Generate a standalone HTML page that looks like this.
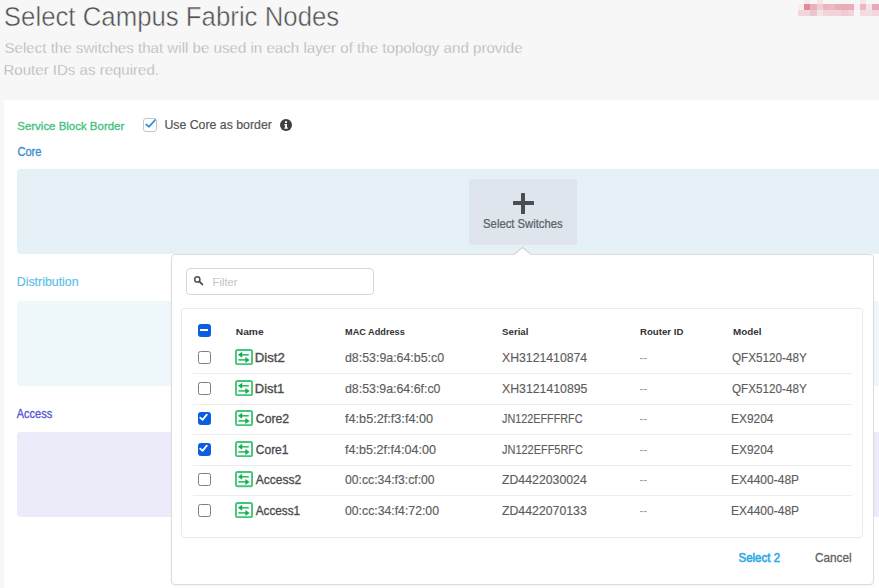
<!DOCTYPE html>
<html><head><meta charset="utf-8">
<style>
*{margin:0;padding:0;box-sizing:border-box}
html,body{width:879px;height:588px;overflow:hidden;background:#f7f7f7;font-family:"Liberation Sans",sans-serif}
.t{position:absolute;white-space:nowrap;line-height:1;transform-origin:0 0}
.px{position:absolute}
#panel{position:absolute;left:4.4px;top:99.6px;width:875px;height:489px;background:#fff}
.area{position:absolute;left:17px;width:870px;height:85px;border-radius:4px}
#chk{position:absolute;left:143px;top:118px;width:14px;height:14px;border:1.6px solid #c6c6c6;border-radius:3px;background:#fff}
#info{position:absolute;left:280.3px;top:119.3px;width:11.8px;height:11.8px;border-radius:50%;background:#3f3f3f}
#btn{position:absolute;left:469px;top:178.8px;width:108px;height:66.5px;background:#dfe5ec;border-radius:2px}
#popup{position:absolute;left:171px;top:254px;width:703px;height:331px;background:#fff;border:1px solid #dcdcdc;border-radius:4px;box-shadow:0 1px 2px rgba(0,0,0,0.05)}
#filter{position:absolute;left:186px;top:268px;width:187.5px;height:26.5px;border:1.8px solid #d6d6d6;border-radius:4px;background:#fff}
#card{position:absolute;left:180.6px;top:308px;width:682.4px;height:230px;border:1px solid #ebebeb;border-radius:3px;background:#fff}
.cb{position:absolute;left:198.2px;width:13px;height:13px;border:1.9px solid #7c7c8c;border-radius:2.5px;background:#fff}
.cbon{background:#0b5ee2;border-color:#0b5ee2}
.sep{position:absolute;left:193px;width:659px;height:1px;background:#ececec}
.ic{position:absolute;left:235px;width:18px;height:16.2px}
</style></head>
<body>
<div class="px" style="left:804.20px;top:0.00px;width:6.20px;height:3.90px;background:#f7eaed"></div>
<div class="px" style="left:816.60px;top:0.00px;width:6.20px;height:3.90px;background:#f5e3e7"></div>
<div class="px" style="left:860.00px;top:0.00px;width:6.20px;height:3.90px;background:#f7e6e9"></div>
<div class="px" style="left:798.00px;top:3.90px;width:6.20px;height:6.20px;background:#f6edef"></div>
<div class="px" style="left:804.20px;top:3.90px;width:6.20px;height:6.20px;background:#e08a9a"></div>
<div class="px" style="left:810.40px;top:3.90px;width:6.20px;height:6.20px;background:#eab0bb"></div>
<div class="px" style="left:816.60px;top:3.90px;width:6.20px;height:6.20px;background:#f0ccd3"></div>
<div class="px" style="left:822.80px;top:3.90px;width:6.20px;height:6.20px;background:#ebb5bf"></div>
<div class="px" style="left:829.00px;top:3.90px;width:6.20px;height:6.20px;background:#ecbac4"></div>
<div class="px" style="left:835.20px;top:3.90px;width:6.20px;height:6.20px;background:#e9adb8"></div>
<div class="px" style="left:841.40px;top:3.90px;width:6.20px;height:6.20px;background:#e8abb7"></div>
<div class="px" style="left:847.60px;top:3.90px;width:6.20px;height:6.20px;background:#e9adb8"></div>
<div class="px" style="left:853.80px;top:3.90px;width:6.20px;height:6.20px;background:#f6eef0"></div>
<div class="px" style="left:860.00px;top:3.90px;width:6.20px;height:6.20px;background:#ebb8c1"></div>
<div class="px" style="left:866.20px;top:3.90px;width:6.20px;height:6.20px;background:#f4e2e6"></div>
<div class="px" style="left:872.40px;top:3.90px;width:6.60px;height:6.20px;background:#e8abb6"></div>
<div class="px" style="left:798.00px;top:10.10px;width:6.20px;height:6.20px;background:#f2d6dc"></div>
<div class="px" style="left:804.20px;top:10.10px;width:6.20px;height:6.20px;background:#f2d6dc"></div>
<div class="px" style="left:810.40px;top:10.10px;width:6.20px;height:6.20px;background:#efc4cc"></div>
<div class="px" style="left:816.60px;top:10.10px;width:6.20px;height:6.20px;background:#f4e2e5"></div>
<div class="px" style="left:822.80px;top:10.10px;width:6.20px;height:6.20px;background:#f2d3d9"></div>
<div class="px" style="left:829.00px;top:10.10px;width:6.20px;height:6.20px;background:#f2d3d9"></div>
<div class="px" style="left:835.20px;top:10.10px;width:6.20px;height:6.20px;background:#f2d3d9"></div>
<div class="px" style="left:841.40px;top:10.10px;width:6.20px;height:6.20px;background:#efcbd2"></div>
<div class="px" style="left:847.60px;top:10.10px;width:6.20px;height:6.20px;background:#f2d3d9"></div>
<div class="px" style="left:860.00px;top:10.10px;width:6.20px;height:6.20px;background:#f3dde1"></div>
<div class="px" style="left:866.20px;top:10.10px;width:6.20px;height:6.20px;background:#f3dde1"></div>
<div class="px" style="left:872.40px;top:10.10px;width:6.60px;height:6.20px;background:#f2d6db"></div>
<div id="panel"></div>
<div id="chk"><svg width="11" height="11" viewBox="0 0 11 11" style="position:absolute;left:0;top:0;overflow:visible"><path d="M2.2 5.6 L5.1 7.7 L11.1 1.0" fill="none" stroke="#2f8fdc" stroke-width="1.8" stroke-linecap="round" stroke-linejoin="round"/></svg></div>
<div id="info"><svg width="12" height="12" viewBox="0 0 12 12" style="position:absolute;left:0;top:0"><rect x="5" y="2.2" width="2" height="1.8" fill="#fff"/><path d="M4.3 5 H7 V8.6 H7.8 V9.8 H4.3 V8.6 H5.1 V6.2 H4.3 Z" fill="#fff"/></svg></div>
<div class="area" style="top:169px;background:#e6f0f7"></div>
<div id="btn"></div>
<div class="px" style="left:521px;top:193px;width:4px;height:21px;background:#4a4e52;border-radius:0.5px"></div>
<div class="px" style="left:512.5px;top:201.3px;width:21px;height:4px;background:#4a4e52;border-radius:0.5px"></div>
<div class="area" style="top:300.5px;background:#eef7fa"></div>
<div class="area" style="top:432px;background:#ebebf9"></div>
<div id="popup"></div>
<svg class="px" style="left:513px;top:246px" width="20" height="10" viewBox="0 0 20 10"><path d="M0.5 9 L9.5 1.2 L18.5 9" fill="#fff" stroke="#d6d6d6" stroke-width="1.2"/><rect x="1.5" y="8.4" width="16" height="2" fill="#fff"/></svg>
<div id="filter"></div>
<svg class="px" style="left:192px;top:274px" width="14" height="14" viewBox="0 0 14 14"><circle cx="5.3" cy="5.4" r="2.6" fill="none" stroke="#505050" stroke-width="1.5"/><path d="M7.3 7.4 L10.3 10.4" stroke="#505050" stroke-width="1.9" stroke-linecap="round"/></svg>
<div id="card"></div>
<div class="cb cbon" style="top:324px"><div style="position:absolute;left:0.7px;top:3.8px;width:8.2px;height:2px;background:#fff"></div></div>
<div class="cb" style="top:351.00px"></div>
<svg class="ic" style="top:349.00px" viewBox="0 0 18 16.2"><rect x="0.95" y="0.95" width="16.1" height="14.3" rx="1.6" fill="#fff" stroke="#3fc77a" stroke-width="1.9"/><path d="M5.6 5.8 H13.8" stroke="#22b75c" stroke-width="1.5"/><path d="M2.9 5.8 L7.2 2.8 V8.8 Z" fill="#12ae50"/><path d="M3.3 10.9 H11" stroke="#22b75c" stroke-width="1.5"/><path d="M14.6 10.9 L10.4 7.9 V13.9 Z" fill="#12ae50"/></svg>
<div class="sep" style="top:373.00px"></div>
<div class="cb" style="top:381.60px"></div>
<svg class="ic" style="top:379.60px" viewBox="0 0 18 16.2"><rect x="0.95" y="0.95" width="16.1" height="14.3" rx="1.6" fill="#fff" stroke="#3fc77a" stroke-width="1.9"/><path d="M5.6 5.8 H13.8" stroke="#22b75c" stroke-width="1.5"/><path d="M2.9 5.8 L7.2 2.8 V8.8 Z" fill="#12ae50"/><path d="M3.3 10.9 H11" stroke="#22b75c" stroke-width="1.5"/><path d="M14.6 10.9 L10.4 7.9 V13.9 Z" fill="#12ae50"/></svg>
<div class="sep" style="top:403.60px"></div>
<div class="cb cbon" style="top:412.20px"><svg width="9" height="9" viewBox="0 0 9 9" style="position:absolute;left:0;top:0;overflow:visible"><path d="M1.2 4.7 L3.5 6.8 L7.8 1.7" fill="none" stroke="#fff" stroke-width="1.8" stroke-linecap="round" stroke-linejoin="round"/></svg></div>
<svg class="ic" style="top:410.20px" viewBox="0 0 18 16.2"><rect x="0.95" y="0.95" width="16.1" height="14.3" rx="1.6" fill="#fff" stroke="#3fc77a" stroke-width="1.9"/><path d="M5.6 5.8 H13.8" stroke="#22b75c" stroke-width="1.5"/><path d="M2.9 5.8 L7.2 2.8 V8.8 Z" fill="#12ae50"/><path d="M3.3 10.9 H11" stroke="#22b75c" stroke-width="1.5"/><path d="M14.6 10.9 L10.4 7.9 V13.9 Z" fill="#12ae50"/></svg>
<div class="sep" style="top:434.20px"></div>
<div class="cb cbon" style="top:442.80px"><svg width="9" height="9" viewBox="0 0 9 9" style="position:absolute;left:0;top:0;overflow:visible"><path d="M1.2 4.7 L3.5 6.8 L7.8 1.7" fill="none" stroke="#fff" stroke-width="1.8" stroke-linecap="round" stroke-linejoin="round"/></svg></div>
<svg class="ic" style="top:440.80px" viewBox="0 0 18 16.2"><rect x="0.95" y="0.95" width="16.1" height="14.3" rx="1.6" fill="#fff" stroke="#3fc77a" stroke-width="1.9"/><path d="M5.6 5.8 H13.8" stroke="#22b75c" stroke-width="1.5"/><path d="M2.9 5.8 L7.2 2.8 V8.8 Z" fill="#12ae50"/><path d="M3.3 10.9 H11" stroke="#22b75c" stroke-width="1.5"/><path d="M14.6 10.9 L10.4 7.9 V13.9 Z" fill="#12ae50"/></svg>
<div class="sep" style="top:464.80px"></div>
<div class="cb" style="top:473.40px"></div>
<svg class="ic" style="top:471.40px" viewBox="0 0 18 16.2"><rect x="0.95" y="0.95" width="16.1" height="14.3" rx="1.6" fill="#fff" stroke="#3fc77a" stroke-width="1.9"/><path d="M5.6 5.8 H13.8" stroke="#22b75c" stroke-width="1.5"/><path d="M2.9 5.8 L7.2 2.8 V8.8 Z" fill="#12ae50"/><path d="M3.3 10.9 H11" stroke="#22b75c" stroke-width="1.5"/><path d="M14.6 10.9 L10.4 7.9 V13.9 Z" fill="#12ae50"/></svg>
<div class="sep" style="top:495.40px"></div>
<div class="cb" style="top:504.00px"></div>
<svg class="ic" style="top:502.00px" viewBox="0 0 18 16.2"><rect x="0.95" y="0.95" width="16.1" height="14.3" rx="1.6" fill="#fff" stroke="#3fc77a" stroke-width="1.9"/><path d="M5.6 5.8 H13.8" stroke="#22b75c" stroke-width="1.5"/><path d="M2.9 5.8 L7.2 2.8 V8.8 Z" fill="#12ae50"/><path d="M3.3 10.9 H11" stroke="#22b75c" stroke-width="1.5"/><path d="M14.6 10.9 L10.4 7.9 V13.9 Z" fill="#12ae50"/></svg>

<svg width="879" height="588" style="position:absolute;left:0;top:0" font-family="Liberation Sans">
<text x="3.88" y="26" font-size="28" font-weight="400" fill="#505050" stroke="#f7f7f7" stroke-width="0.50" transform="matrix(0.9214 0 0 1 0.305 0)">Select Campus Fabric Nodes</text>
<text x="4.50" y="53" font-size="15.4" font-weight="400" fill="#b0b0b0" stroke="#f7f7f7" stroke-width="0.30" transform="matrix(0.9812 0 0 1 0.085 0)">Select the switches that will be used in each layer of the topology and provide</text>
<text x="3.52" y="75" font-size="15.4" font-weight="400" fill="#b0b0b0" stroke="#f7f7f7" stroke-width="0.30" transform="matrix(0.9768 0 0 1 0.082 0)">Router IDs as required.</text>
<text x="17.30" y="129.6" font-size="11.8" font-weight="400" fill="#3fc47f" stroke="#3fc47f" stroke-width="0.35" transform="matrix(0.9717 0 0 1 0.489 0)">Service Block Border</text>
<text x="164.40" y="129.2" font-size="12.8" font-weight="400" fill="#555555" stroke="#555555" stroke-width="0.20" transform="matrix(0.9635 0 0 1 6.004 0)">Use Core as border</text>
<text x="17.40" y="155.6" font-size="12.5" font-weight="400" fill="#3a8ed2" stroke="#3a8ed2" stroke-width="0.35" transform="matrix(0.8916 0 0 1 1.886 0)">Core</text>
<text x="16.71" y="286.5" font-size="12.5" font-weight="400" fill="#5fc0e7" stroke="#5fc0e7" stroke-width="0.20" transform="matrix(0.9907 0 0 1 0.155 0)">Distribution</text>
<text x="16.80" y="417.7" font-size="12.5" font-weight="400" fill="#5757da" stroke="#5757da" stroke-width="0.35" transform="matrix(0.8791 0 0 1 2.031 0)">Access</text>
<text x="483.10" y="227.9" font-size="12.6" font-weight="400" fill="#5c6166" stroke="#5c6166" stroke-width="0.25" transform="matrix(0.8951 0 0 1 50.696 0)">Select Switches</text>
<text x="212.60" y="285.7" font-size="11.3" font-weight="400" fill="#c4c4c4" transform="matrix(0.9905 0 0 1 2.027 0)">Filter</text>
<text x="235.80" y="334.7" font-size="9.5" font-weight="700" fill="#333" transform="matrix(1.0785 0 0 1 -18.511 0)">Name</text>
<text x="345.00" y="334.7" font-size="9.5" font-weight="700" fill="#333" transform="matrix(0.9677 0 0 1 11.154 0)">MAC Address</text>
<text x="502.10" y="334.7" font-size="9.5" font-weight="700" fill="#333" transform="matrix(1.0182 0 0 1 -9.156 0)">Serial</text>
<text x="640.00" y="334.7" font-size="9.5" font-weight="700" fill="#333" transform="matrix(1.0189 0 0 1 -12.096 0)">Router ID</text>
<text x="733.00" y="334.7" font-size="9.5" font-weight="700" fill="#333" transform="matrix(1.0372 0 0 1 -27.266 0)">Model</text>
<text x="254.78" y="362.0" font-size="13" font-weight="400" fill="#4c4c4c" stroke="#4c4c4c" stroke-width="0.35" transform="matrix(1.0180 0 0 1 -4.594 0)">Dist2</text>
<text x="345.00" y="362.0" font-size="12.6" font-weight="400" fill="#5c5c5c" stroke="#5c5c5c" stroke-width="0.15" transform="matrix(0.9828 0 0 1 5.926 0)">d8:53:9a:64:b5:c0</text>
<text x="502.00" y="362.0" font-size="12.6" font-weight="400" fill="#5c5c5c" stroke="#5c5c5c" stroke-width="0.15" transform="matrix(0.9734 0 0 1 13.369 0)">XH3121410874</text>
<text x="639.60" y="362.0" font-size="12.6" font-weight="400" fill="#9a9a9a" transform="matrix(0.9031 0 0 1 61.964 0)">--</text>
<text x="732.00" y="362.0" font-size="12.6" font-weight="400" fill="#5c5c5c" stroke="#5c5c5c" stroke-width="0.15" transform="matrix(0.9296 0 0 1 51.503 0)">QFX5120-48Y</text>
<text x="254.81" y="392.6" font-size="13" font-weight="400" fill="#4c4c4c" stroke="#4c4c4c" stroke-width="0.35" transform="matrix(0.9934 0 0 1 1.689 0)">Dist1</text>
<text x="345.00" y="392.6" font-size="12.6" font-weight="400" fill="#5c5c5c" stroke="#5c5c5c" stroke-width="0.15" transform="matrix(0.9812 0 0 1 6.476 0)">d8:53:9a:64:6f:c0</text>
<text x="502.00" y="392.6" font-size="12.6" font-weight="400" fill="#5c5c5c" stroke="#5c5c5c" stroke-width="0.15" transform="matrix(0.9768 0 0 1 11.649 0)">XH3121410895</text>
<text x="639.60" y="392.6" font-size="12.6" font-weight="400" fill="#9a9a9a" transform="matrix(0.9031 0 0 1 61.964 0)">--</text>
<text x="732.00" y="392.6" font-size="12.6" font-weight="400" fill="#5c5c5c" stroke="#5c5c5c" stroke-width="0.15" transform="matrix(0.9296 0 0 1 51.503 0)">QFX5120-48Y</text>
<text x="255.80" y="423.2" font-size="13" font-weight="400" fill="#4c4c4c" stroke="#4c4c4c" stroke-width="0.35" transform="matrix(0.9438 0 0 1 14.378 0)">Core2</text>
<text x="345.00" y="423.2" font-size="12.6" font-weight="400" fill="#5c5c5c" stroke="#5c5c5c" stroke-width="0.15" transform="matrix(1.0078 0 0 1 -2.685 0)">f4:b5:2f:f3:f4:00</text>
<text x="502.00" y="423.2" font-size="12.6" font-weight="400" fill="#5c5c5c" stroke="#5c5c5c" stroke-width="0.15" transform="matrix(0.8594 0 0 1 70.579 0)">JN122EFFFRFC</text>
<text x="639.60" y="423.2" font-size="12.6" font-weight="400" fill="#9a9a9a" transform="matrix(0.9031 0 0 1 61.964 0)">--</text>
<text x="731.06" y="423.2" font-size="12.6" font-weight="400" fill="#5c5c5c" stroke="#5c5c5c" stroke-width="0.15" transform="matrix(0.9449 0 0 1 40.247 0)">EX9204</text>
<text x="255.80" y="453.8" font-size="13" font-weight="400" fill="#4c4c4c" stroke="#4c4c4c" stroke-width="0.35" transform="matrix(0.9239 0 0 1 19.468 0)">Core1</text>
<text x="345.00" y="453.8" font-size="12.6" font-weight="400" fill="#5c5c5c" stroke="#5c5c5c" stroke-width="0.15" transform="matrix(1.0008 0 0 1 -0.288 0)">f4:b5:2f:f4:04:00</text>
<text x="502.00" y="453.8" font-size="12.6" font-weight="400" fill="#5c5c5c" stroke="#5c5c5c" stroke-width="0.15" transform="matrix(0.8701 0 0 1 65.224 0)">JN122EFF5RFC</text>
<text x="639.60" y="453.8" font-size="12.6" font-weight="400" fill="#9a9a9a" transform="matrix(0.9031 0 0 1 61.964 0)">--</text>
<text x="731.06" y="453.8" font-size="12.6" font-weight="400" fill="#5c5c5c" stroke="#5c5c5c" stroke-width="0.15" transform="matrix(0.9449 0 0 1 40.247 0)">EX9204</text>
<text x="255.80" y="484.4" font-size="13" font-weight="400" fill="#4c4c4c" stroke="#4c4c4c" stroke-width="0.35" transform="matrix(0.9223 0 0 1 19.882 0)">Access2</text>
<text x="345.00" y="484.4" font-size="12.6" font-weight="400" fill="#5c5c5c" stroke="#5c5c5c" stroke-width="0.15" transform="matrix(0.9707 0 0 1 10.108 0)">00:cc:34:f3:cf:00</text>
<text x="502.00" y="484.4" font-size="12.6" font-weight="400" fill="#5c5c5c" stroke="#5c5c5c" stroke-width="0.15" transform="matrix(0.9767 0 0 1 11.702 0)">ZD4422030024</text>
<text x="639.60" y="484.4" font-size="12.6" font-weight="400" fill="#9a9a9a" transform="matrix(0.9031 0 0 1 61.964 0)">--</text>
<text x="731.05" y="484.4" font-size="12.6" font-weight="400" fill="#5c5c5c" stroke="#5c5c5c" stroke-width="0.15" transform="matrix(0.9526 0 0 1 34.642 0)">EX4400-48P</text>
<text x="255.80" y="515.0" font-size="13" font-weight="400" fill="#4c4c4c" stroke="#4c4c4c" stroke-width="0.35" transform="matrix(0.9018 0 0 1 25.113 0)">Access1</text>
<text x="345.00" y="515.0" font-size="12.6" font-weight="400" fill="#5c5c5c" stroke="#5c5c5c" stroke-width="0.15" transform="matrix(0.9729 0 0 1 9.354 0)">00:cc:34:f4:72:00</text>
<text x="502.00" y="515.0" font-size="12.6" font-weight="400" fill="#5c5c5c" stroke="#5c5c5c" stroke-width="0.15" transform="matrix(0.9767 0 0 1 11.702 0)">ZD4422070133</text>
<text x="639.60" y="515.0" font-size="12.6" font-weight="400" fill="#9a9a9a" transform="matrix(0.9031 0 0 1 61.964 0)">--</text>
<text x="731.05" y="515.0" font-size="12.6" font-weight="400" fill="#5c5c5c" stroke="#5c5c5c" stroke-width="0.15" transform="matrix(0.9526 0 0 1 34.642 0)">EX4400-48P</text>
<text x="738.50" y="561.8" font-size="12.8" font-weight="400" fill="#2ba8e8" stroke="#2ba8e8" stroke-width="0.60" transform="matrix(0.8998 0 0 1 74.003 0)">Select 2</text>
<text x="815.00" y="561.8" font-size="12.8" font-weight="400" fill="#626262" stroke="#626262" stroke-width="0.30" transform="matrix(0.9182 0 0 1 66.699 0)">Cancel</text>
</svg>
</body></html>
